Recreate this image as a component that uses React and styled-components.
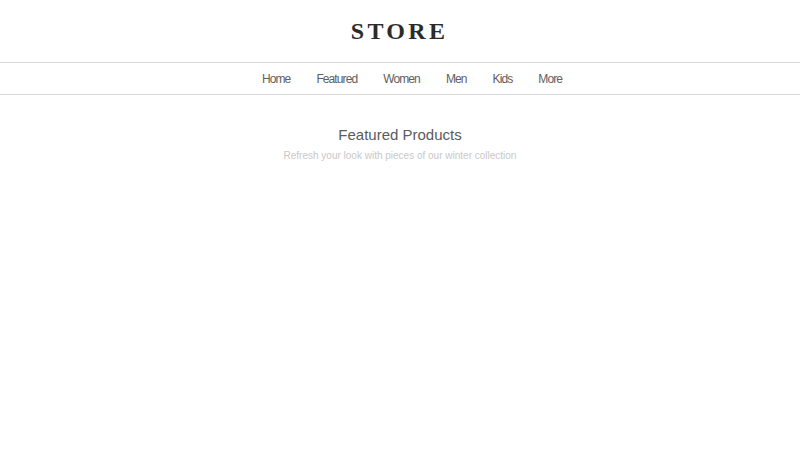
import styled, { createGlobalStyle } from 'styled-components'

const GlobalStyle = createGlobalStyle`
  html, body {
    margin: 0;
    padding: 0;
    background: #fff;
  }
  body {
    font-family: "Liberation Sans", Arial, sans-serif;
  }
`

const Page = styled.div`
  width: 800px;
  height: 450px;
  background: #fff;
`

const Header = styled.header`
  height: 62px;
  display: flex;
  align-items: center;
  justify-content: center;
`

const Logo = styled.h1`
  margin: 0;
  padding-right: 1px;
  font-family: "Liberation Serif", "Times New Roman", serif;
  font-weight: 700;
  font-size: 24px;
  letter-spacing: 3.3px;
  color: #2b2b2b;
`

const Nav = styled.nav`
  height: 31px;
  border-top: 1px solid #d6d6d6;
  border-bottom: 1px solid #d6d6d6;
`

const NavList = styled.ul`
  list-style: none;
  margin: 0;
  padding: 0 0 0 24px;
  height: 100%;
  display: flex;
  align-items: center;
  justify-content: center;
  gap: 26px;
`

const NavItem = styled.li`
  font-family: "Liberation Sans Narrow", "Liberation Sans", Arial, sans-serif;
  font-size: 12px;
  letter-spacing: -0.9px;
  color: #606060;
  cursor: pointer;
`

const Section = styled.section`
  padding-top: 30px;
  text-align: center;
`

const Title = styled.h2`
  margin: 0;
  font-size: 15px;
  font-weight: 400;
  color: #5a5a5a;
  line-height: 20px;
`

const Subtitle = styled.p`
  margin: 4px 0 0;
  font-size: 10px;
  color: #c8c8c8;
  line-height: 14px;
`

const links = ['Home', 'Featured', 'Women', 'Men', 'Kids', 'More']

function App() {
  return (
    <Page>
      <GlobalStyle />
      <Header>
        <Logo>STORE</Logo>
      </Header>
      <Nav>
        <NavList>
          {links.map((link) => (
            <NavItem key={link}>{link}</NavItem>
          ))}
        </NavList>
      </Nav>
      <Section>
        <Title>Featured Products</Title>
        <Subtitle>Refresh your look with pieces of our winter collection</Subtitle>
      </Section>
    </Page>
  )
}

export default App
